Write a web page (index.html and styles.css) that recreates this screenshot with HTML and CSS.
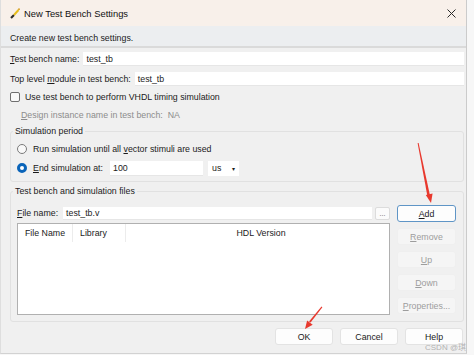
FILE: index.html
```html
<!DOCTYPE html>
<html lang="en">
<head>
    <meta charset="UTF-8">
    <meta name="viewport" content="width=device-width, initial-scale=1.0">
    <title>New Test Bench Settings</title>
    <link rel="stylesheet" href="styles.css">
</head>
<body>
    <div class="dialog">
        <div class="titlebar">
            <svg class="app-icon" width="10" height="11" viewBox="0 0 10 11">
                <path d="M1 10 L4 7" stroke="#2b2b2b" stroke-width="2.2"/>
                <path d="M4 7 L8.5 2" stroke="#e6bd1e" stroke-width="2"/>
                <circle cx="9" cy="1.2" r="0.9" fill="#d49a12"/>
            </svg>
            <span class="title">New Test Bench Settings</span>
            <svg class="close" width="9" height="9" viewBox="0 0 9 9">
                <path d="M0.5 0.5 L8.5 8.5 M8.5 0.5 L0.5 8.5" stroke="#2a2a2a" stroke-width="1"/>
            </svg>
        </div>

        <div class="banner">Create new test bench settings.</div>

        <div class="content">
            <div class="row first">
                <label><u>T</u>est bench name:</label>
                <div class="field">test_tb</div>
            </div>
            <div class="row second">
                <label>Top level <u>m</u>odule in test bench:</label>
                <div class="field">test_tb</div>
            </div>
            <div class="check-row">
                <span class="checkbox"></span>
                <span>Use test bench to perform VHDL timing simulation</span>
            </div>
            <div class="note"><u>D</u>esign instance name in test bench:&nbsp; NA</div>

            <fieldset class="group period">
                <legend>Simulation period</legend>
                <div class="radio-row">
                    <span class="radio"></span>
                    <span>Run simulation until all <u>v</u>ector stimuli are used</span>
                </div>
                <div class="radio-row">
                    <span class="radio on"></span>
                    <span class="end-label"><u>E</u>nd simulation at:</span>
                    <div class="field time">100</div>
                    <div class="select">us <span class="caret">&#9662;</span></div>
                </div>
            </fieldset>

            <fieldset class="group files">
                <legend>Test bench and simulation files</legend>
                <div class="files-grid">
                    <div class="files-left">
                        <div class="file-row">
                            <label><u>F</u>ile name:</label>
                            <div class="field">test_tb.v</div>
                            <div class="browse">...</div>
                        </div>
                        <div class="table">
                            <div class="thead">
                                <div class="th name">File Name</div>
                                <div class="th lib">Library</div>
                                <div class="th hdl">HDL Version</div>
                            </div>
                        </div>
                    </div>
                    <div class="side-buttons">
                        <div class="btn primary"><u>A</u>dd</div>
                        <div class="btn disabled"><u>R</u>emove</div>
                        <div class="btn disabled"><u>U</u>p</div>
                        <div class="btn disabled"><u>D</u>own</div>
                        <div class="btn disabled"><u>P</u>roperties...</div>
                    </div>
                </div>
            </fieldset>

            <div class="footer">
                <div class="btn">OK</div>
                <div class="btn">Cancel</div>
                <div class="btn">Help</div>
            </div>
        </div>
    </div>

    <svg class="arrows" width="474" height="355" viewBox="0 0 474 355">
        <polygon points="417.6,143 418.6,143 429.9,195 427.3,195.4" fill="#e8392e"/>
        <polygon points="431,203 432.6,193.5 425.8,194.9" fill="#e8392e"/>
        <polygon points="321.5,306.6 322.4,307.3 310.6,322.6 309,321.4" fill="#e8392e"/>
        <polygon points="305,329 312.7,324.8 307.1,320.6" fill="#e8392e"/>
    </svg>

    <div class="watermark">CSDN @琪</div>
</body>
</html>
```

FILE: styles.css
```css
* {
    margin: 0;
    padding: 0;
    box-sizing: border-box;
}

body {
    background-color: #f7f7f7;
    font-family: "Liberation Sans", Arial, sans-serif;
    font-size: 8.8px;
    color: #1b1b1b;
    width: 474px;
    height: 355px;
    overflow: hidden;
}

u {
    text-decoration-thickness: 1px;
    text-underline-offset: 1px;
}

.dialog {
    width: 467px;
    height: 354px;
    background-color: #f0f0f0;
    border-left: 1px solid #dedede;
    border-right: 1px solid #cbcbcb;
    border-bottom: 1px solid #d2d2d2;
    display: flex;
    flex-direction: column;
}

.titlebar {
    height: 26px;
    background-color: #f8f0ea;
    display: flex;
    align-items: center;
    padding: 0 10px 0 9px;
    gap: 4px;
}

.title {
    flex: 1;
    font-size: 9.4px;
    color: #111;
}

.banner {
    height: 22px;
    background-color: #eceef0;
    border-bottom: 2px solid #dadada;
    padding: 3px 9px 0;
    display: flex;
    align-items: center;
}

.content {
    flex: 1;
    display: flex;
    flex-direction: column;
    padding: 4px 2px 0 9px;
}

.row {
    display: flex;
    align-items: center;
    height: 14px;
    gap: 4px;
}

.row.second {
    margin-top: 6px;
}

.field {
    flex: 1;
    height: 14px;
    background-color: #fff;
    border-bottom: 1px solid #e6e6e6;
    padding-left: 3px;
    display: flex;
    align-items: center;
}

.check-row {
    display: flex;
    align-items: center;
    gap: 5px;
    height: 14px;
    margin-top: 4px;
}

.checkbox {
    width: 10px;
    height: 10px;
    border: 1px solid #6f6f6f;
    border-radius: 2px;
    background-color: #f9f9f9;
}

.note {
    height: 13px;
    margin-top: 4px;
    padding-left: 11px;
    color: #8c8c8c;
    display: flex;
    align-items: center;
}

.group {
    border: 1px solid #e1e1e1;
    border-radius: 3px;
    padding: 0 7px 0 6px;
    min-width: 0;
}

.group legend {
    margin-left: -4px;
    padding: 0 2px;
    line-height: 12px;
    height: 12px;
}

.period {
    margin-top: 4px;
    padding-top: 4px;
    padding-bottom: 5px;
}

.radio-row {
    display: flex;
    align-items: center;
    height: 16px;
    gap: 6px;
}

.radio-row + .radio-row {
    margin-top: 3px;
}

.radio {
    width: 10px;
    height: 10px;
    border: 1px solid #7a7a7a;
    border-radius: 50%;
    background-color: #f9f9f9;
}

.radio.on {
    border: 3px solid #0a64b9;
    background-color: #fff;
}

.end-label {
    width: 71px;
}

.field.time {
    flex: none;
    width: 93px;
    height: 15px;
}

.select {
    margin-left: -1px;
    width: 31px;
    height: 15px;
    background-color: #fff;
    display: flex;
    align-items: center;
    justify-content: space-between;
    padding: 0 4px 0 4px;
}

.caret {
    font-size: 6px;
}

.files {
    margin-top: 3px;
    padding-top: 8px;
    padding-bottom: 6px;
}

.files-grid {
    display: grid;
    grid-template-columns: 1fr 59px;
    gap: 7px;
}

.file-row {
    display: flex;
    align-items: center;
    height: 16px;
    gap: 5px;
}

.file-row .field {
    height: 13px;
}

.browse {
    width: 15px;
    height: 13px;
    margin-left: -2px;
    background-color: #fbfbfb;
    border: 1px solid #dcdcdc;
    border-radius: 2px;
    font-size: 7px;
    color: #555;
    display: flex;
    align-items: center;
    justify-content: center;
}

.table {
    margin-top: 2px;
    height: 92px;
    background-color: #fff;
    border: 1px solid #b0b0b0;
}

.thead {
    display: flex;
    height: 18px;
}

.th {
    display: flex;
    align-items: center;
    padding-left: 7px;
}

.th.name {
    width: 55px;
    border-right: 1px solid #ececec;
}

.th.lib {
    width: 53px;
    border-right: 1px solid #ececec;
}

.th.hdl {
    flex: 1;
    justify-content: center;
}

.side-buttons {
    display: flex;
    flex-direction: column;
    gap: 6px;
}

.btn {
    height: 17px;
    background-color: #fdfdfd;
    border: 1px solid #d6d6d6;
    border-radius: 3px;
    display: flex;
    align-items: center;
    justify-content: center;
}

.btn.primary {
    border-color: #5f95c6;
}

.btn.disabled {
    background-color: #f5f5f5;
    border-color: #efefef;
    color: #9d9d9d;
}

.footer {
    margin-top: 6px;
    display: flex;
    justify-content: flex-end;
    gap: 7px;
    padding-right: 1px;
}

.footer .btn {
    width: 58px;
    border-color: #e3e3e3;
}

.arrows {
    position: absolute;
    top: 0;
    left: 0;
    pointer-events: none;
}

.watermark {
    position: absolute;
    left: 425px;
    top: 342px;
    line-height: 11px;
    white-space: nowrap;
    font-family: "Liberation Sans", "Noto Sans CJK SC", sans-serif;
    font-size: 8px;
    color: rgba(160, 160, 160, 0.8);
}
```
